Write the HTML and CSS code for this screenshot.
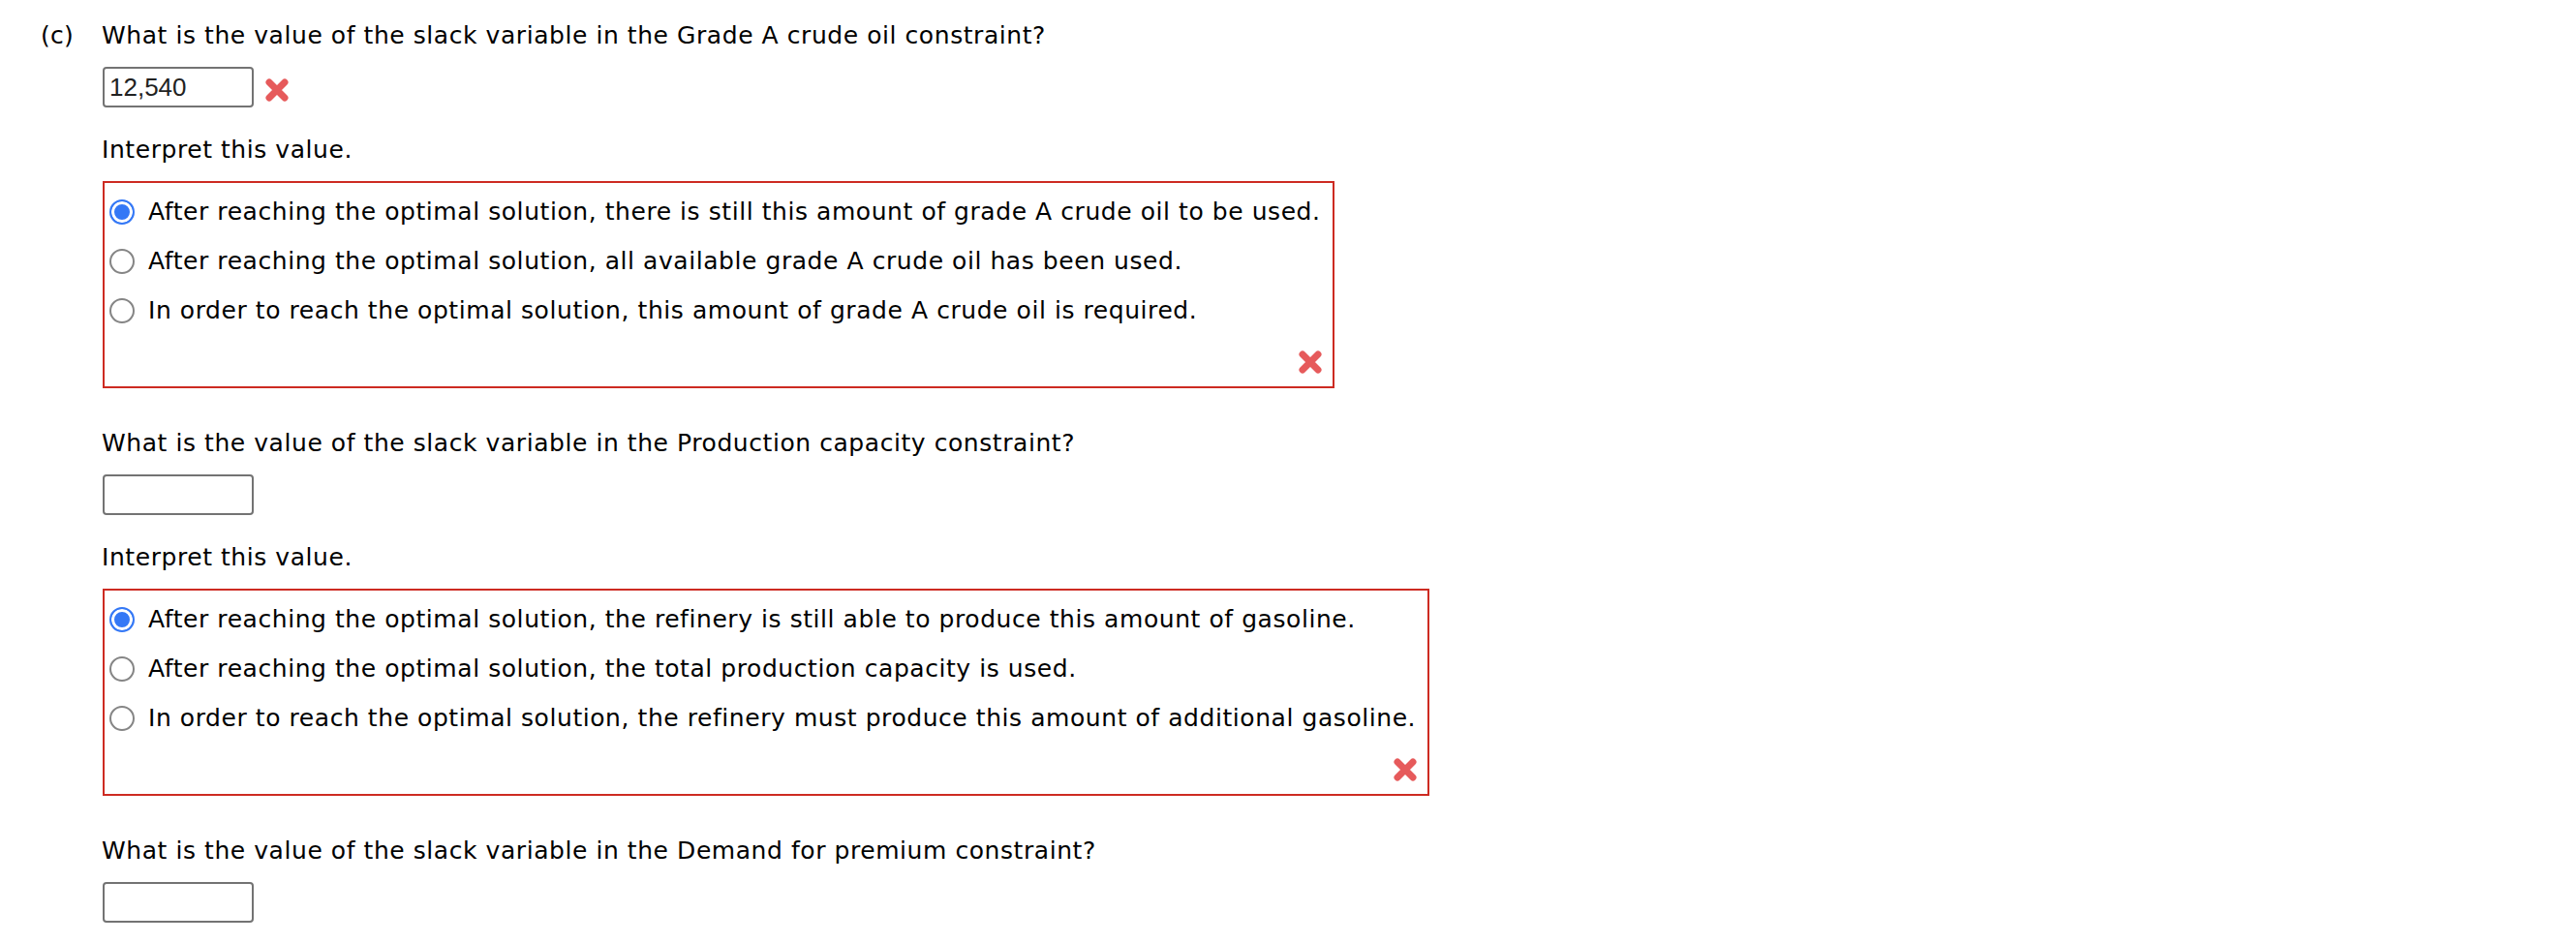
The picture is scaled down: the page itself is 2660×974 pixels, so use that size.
FILE: index.html
```html
<!DOCTYPE html>
<html lang="en">

<head>
    <meta charset="UTF-8">
    <meta name="viewport" content="width=device-width, initial-scale=1.0">
    <title>Slack Variables - Part (c)</title>
    <link rel="stylesheet" href="styles.css">
</head>

<body>
    <div class="part">
        <div class="part-label">(c)</div>

        <div class="part-body">
            <!-- Grade A crude oil -->
            <div class="question">
                <p class="prompt">What is the value of the slack variable in the Grade A crude oil constraint?</p>
                <div class="answer-row">
                    <input type="text" class="answer" value="12,540">
                    <svg class="wrong" viewBox="0 0 28 26" aria-label="incorrect">
                        <path d="M6 5 L22 21 M22 5 L6 21" />
                    </svg>
                </div>

                <p class="prompt interpret">Interpret this value.</p>
                <div class="choices">
                    <label class="choice">
                        <input type="radio" name="gradeA" checked>
                        <span>After reaching the optimal solution, there is still this amount of grade A crude oil to be used.</span>
                    </label>
                    <label class="choice">
                        <input type="radio" name="gradeA">
                        <span>After reaching the optimal solution, all available grade A crude oil has been used.</span>
                    </label>
                    <label class="choice">
                        <input type="radio" name="gradeA">
                        <span>In order to reach the optimal solution, this amount of grade A crude oil is required.</span>
                    </label>
                    <div class="choices-mark">
                        <svg class="wrong" viewBox="0 0 28 26" aria-label="incorrect">
                            <path d="M6 5 L22 21 M22 5 L6 21" />
                        </svg>
                    </div>
                </div>
            </div>

            <!-- Production capacity -->
            <div class="question">
                <p class="prompt">What is the value of the slack variable in the Production capacity constraint?</p>
                <div class="answer-row">
                    <input type="text" class="answer" value="">
                </div>

                <p class="prompt interpret">Interpret this value.</p>
                <div class="choices">
                    <label class="choice">
                        <input type="radio" name="capacity" checked>
                        <span>After reaching the optimal solution, the refinery is still able to produce this amount of gasoline.</span>
                    </label>
                    <label class="choice">
                        <input type="radio" name="capacity">
                        <span>After reaching the optimal solution, the total production capacity is used.</span>
                    </label>
                    <label class="choice">
                        <input type="radio" name="capacity">
                        <span>In order to reach the optimal solution, the refinery must produce this amount of additional gasoline.</span>
                    </label>
                    <div class="choices-mark">
                        <svg class="wrong" viewBox="0 0 28 26" aria-label="incorrect">
                            <path d="M6 5 L22 21 M22 5 L6 21" />
                        </svg>
                    </div>
                </div>
            </div>

            <!-- Demand for premium -->
            <div class="question">
                <p class="prompt">What is the value of the slack variable in the Demand for premium constraint?</p>
                <div class="answer-row">
                    <input type="text" class="answer" value="">
                </div>
            </div>
        </div>
    </div>
</body>

</html>
```

FILE: styles.css
```css
body {
    font-family: "DejaVu Sans", Verdana, sans-serif;
    font-size: 25px;
    letter-spacing: 0.56px;
    color: #000;
    background-color: #fff;
    margin: 0;
    padding: 23px 0 0 42px;
}

.part {
    display: flex;
}

.part-label {
    width: 63px;
    flex-shrink: 0;
    line-height: 28px;
    letter-spacing: 0.3px;
}

.part-body {
    display: flex;
    flex-direction: column;
}

.question {
    margin-bottom: 43px;
}

.prompt {
    margin: 0;
    line-height: 28px;
}

.interpret {
    margin-top: 30px;
}

.answer-row {
    display: flex;
    align-items: center;
    gap: 10px;
    margin-top: 18px;
    height: 42px;
}

.answer {
    box-sizing: border-box;
    width: 156px;
    height: 42px;
    margin: 0 0 0 1px;
    padding: 0 5px;
    border: 2px solid #737373;
    border-radius: 4px;
    font-family: "Liberation Sans", Arial, sans-serif;
    font-size: 26px;
    letter-spacing: 0;
    color: #222;
    background: #fff;
}

.wrong {
    width: 28px;
    height: 26px;
    margin-top: 6px;
}

.wrong path {
    fill: none;
    stroke: #e65a5b;
    stroke-width: 7;
    stroke-linecap: round;
}

.choices {
    width: fit-content;
    margin-top: 18px;
    margin-left: 1px;
    padding: 4px 12px 12px 5px;
    border: 2px solid #cd2b22;
}

.choice {
    display: flex;
    align-items: center;
    gap: 14px;
    height: 51px;
    white-space: nowrap;
}

.choice input[type="radio"] {
    appearance: none;
    -webkit-appearance: none;
    box-sizing: border-box;
    width: 26px;
    height: 26px;
    margin: 0;
    flex-shrink: 0;
    border: 2px solid #858585;
    border-radius: 50%;
    background: #fff;
}

.choice input[type="radio"]:checked {
    border-color: #3478f6;
    background: #3478f6;
    box-shadow: inset 0 0 0 3px #fff;
}

.choices-mark {
    display: flex;
    justify-content: flex-end;
    margin-top: 15px;
    margin-right: -3px;
}

.choices-mark .wrong {
    margin-top: 0;
}
```
